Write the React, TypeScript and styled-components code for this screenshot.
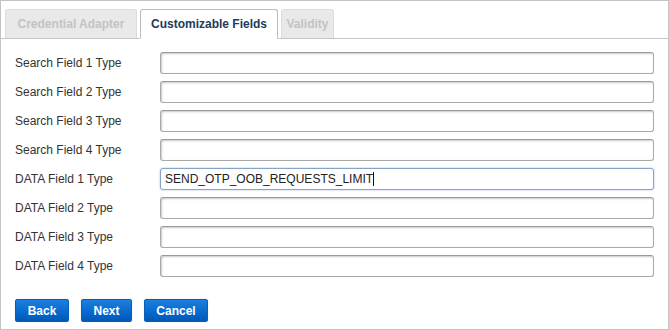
import React from "react";
import styled, { createGlobalStyle } from "styled-components";

const Global = createGlobalStyle`
  html, body { margin: 0; padding: 0; background: #fff; }
  body { font-family: "Liberation Sans", Arial, sans-serif; }
  * { box-sizing: border-box; }
`;

const Frame = styled.div`
  width: 669px;
  height: 330px;
  border: 1px solid #c3c3c3;
  background: #fff;
  display: flex;
  flex-direction: column;
`;

const TabBar = styled.div`
  display: flex;
  align-items: flex-end;
  gap: 3px;
  padding: 8px 0 0 4px;
  height: 38px;
  border-bottom: 1px solid #c6c6c6;
`;

const Tab = styled.div<{ $active?: boolean; $w: number }>`
  width: ${(p) => p.$w}px;
  height: ${(p) => (p.$active ? 30 : 29)}px;
  margin-bottom: ${(p) => (p.$active ? -1 : 0)}px;
  display: flex;
  align-items: center;
  justify-content: center;
  font-size: 12px;
  font-weight: bold;
  border: 1px solid ${(p) => (p.$active ? "#bcbcbc" : "#dcdcdc")};
  border-bottom: ${(p) => (p.$active ? "1px solid #fff" : "none")};
  border-radius: 3px 3px 0 0;
  background: ${(p) => (p.$active ? "#fff" : "#e9e9e9")};
  color: ${(p) => (p.$active ? "#1d3a5c" : "#c3c3c3")};
  padding-bottom: 1px;
`;

const Form = styled.div`
  display: grid;
  grid-template-columns: 145px 494px;
  grid-auto-rows: 22px;
  row-gap: 7px;
  padding: 13px 0 0 14px;
`;

const Label = styled.label`
  font-size: 12px;
  color: #333;
  display: flex;
  align-items: center;
`;

const Input = styled.input`
  width: 494px;
  height: 22px;
  margin: 0;
  padding: 0 4px;
  font-family: "Liberation Sans", Arial, sans-serif;
  font-size: 12px;
  color: #222;
  border: 1px solid #a9a9a9;
  border-top-color: #9a9a9a;
  border-radius: 3px;
  background: #fff;
  box-shadow: inset 1px 1px 2px rgba(0, 0, 0, 0.22);
  outline: none;
`;

const Caret = styled.span`
  display: inline-block;
  width: 1px;
  height: 14px;
  background: #111;
  vertical-align: middle;
`;

const FocusBox = styled.div`
  width: 494px;
  height: 22px;
  padding: 0 4px;
  display: flex;
  align-items: center;
  font-size: 12px;
  color: #222;
  border: 1px solid #86a5c6;
  border-radius: 3px;
  background: #fff;
  box-shadow: 0 0 2px rgba(80, 130, 190, 0.55);
`;

const Buttons = styled.div`
  display: flex;
  gap: 12px;
  padding: 22px 0 0 14px;
`;

const Button = styled.button<{ $w: number }>`
  width: ${(p) => p.$w}px;
  height: 23px;
  margin: 0;
  padding: 0;
  font-family: "Liberation Sans", Arial, sans-serif;
  font-size: 12px;
  font-weight: bold;
  color: #fff;
  border: 1px solid #0a5fb5;
  border-radius: 2px;
  background: linear-gradient(to bottom, #1c80dc 0%, #0a6cd0 50%, #0058b8 100%);
  box-shadow: 0 0 1px rgba(0, 0, 0, 0.3);
`;

const fields = [
  "Search Field 1 Type",
  "Search Field 2 Type",
  "Search Field 3 Type",
  "Search Field 4 Type",
  "DATA Field 1 Type",
  "DATA Field 2 Type",
  "DATA Field 3 Type",
  "DATA Field 4 Type",
];

export default function App() {
  return (
    <>
      <Global />
      <Frame>
        <TabBar>
          <Tab $w={132}>Credential Adapter</Tab>
          <Tab $w={138} $active>
            Customizable Fields
          </Tab>
          <Tab $w={53}>Validity</Tab>
        </TabBar>
        <Form>
          {fields.map((f, i) => (
            <React.Fragment key={f}>
              <Label>{f}</Label>
              {i === 4 ? (
                <FocusBox>
                  SEND_OTP_OOB_REQUESTS_LIMIT
                  <Caret />
                </FocusBox>
              ) : (
                <Input readOnly />
              )}
            </React.Fragment>
          ))}
        </Form>
        <Buttons>
          <Button $w={54}>Back</Button>
          <Button $w={51}>Next</Button>
          <Button $w={64}>Cancel</Button>
        </Buttons>
      </Frame>
    </>
  );
}
